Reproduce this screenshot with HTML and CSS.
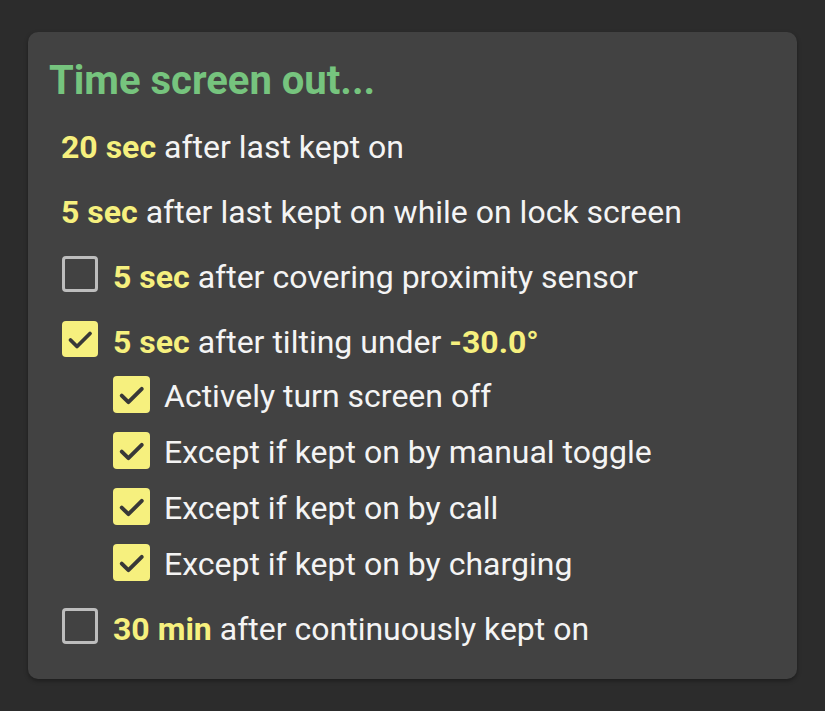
FILE: index.html
```html
<!DOCTYPE html>
<html lang="en">
<head>
<meta charset="utf-8">
<title>Time screen out</title>
<link rel="stylesheet" href="styles.css">
</head>
<body>
<div class="card">
  <h1 class="title">Time screen out...</h1>
  <div class="list">
    <div class="row"><span class="text"><b>20 sec</b> after last kept on</span></div>
    <div class="row"><span class="text"><b>5 sec</b> after last kept on while on lock screen</span></div>
    <div class="row"><span class="box"></span><span class="text"><b>5 sec</b> after covering proximity sensor</span></div>
    <div class="group">
      <div class="row"><span class="box on"><svg viewBox="0 0 36 36"><path d="M8.5 19L15 25.5L28 12.5"/></svg></span><span class="text"><b>5 sec</b> after tilting under <b>-30.0°</b></span></div>
      <div class="sublist">
        <div class="row sub"><span class="box on"><svg viewBox="0 0 36 36"><path d="M8.5 19L15 25.5L28 12.5"/></svg></span><span class="text">Actively turn screen off</span></div>
        <div class="row sub"><span class="box on"><svg viewBox="0 0 36 36"><path d="M8.5 19L15 25.5L28 12.5"/></svg></span><span class="text">Except if kept on by manual toggle</span></div>
        <div class="row sub"><span class="box on"><svg viewBox="0 0 36 36"><path d="M8.5 19L15 25.5L28 12.5"/></svg></span><span class="text">Except if kept on by call</span></div>
        <div class="row sub"><span class="box on"><svg viewBox="0 0 36 36"><path d="M8.5 19L15 25.5L28 12.5"/></svg></span><span class="text">Except if kept on by charging</span></div>
      </div>
    </div>
    <div class="row"><span class="box"></span><span class="text"><b>30 min</b> after continuously kept on</span></div>
  </div>
</div>
</body>
</html>
```

FILE: styles.css
```css
html, body {
  margin: 0;
  padding: 0;
  background: #2c2c2c;
}
body {
  padding: 32px 28px;
  font-family: Roboto, "Liberation Sans", sans-serif;
}
.card {
  background: #424242;
  border-radius: 10px;
  box-shadow: 0 2px 4px rgba(0,0,0,0.35);
  padding: 26px 21px 28px 21px;
}
.title {
  margin: 0;
  font-size: 40px;
  line-height: 46px;
  font-weight: 700;
  color: #76c47e;
}
.list {
  margin-top: 21px;
  margin-left: 12px;
  display: flex;
  flex-direction: column;
  gap: 21px;
}
.group {
  display: flex;
  flex-direction: column;
  gap: 10px;
}
.sublist {
  margin-left: 52px;
  display: flex;
  flex-direction: column;
  gap: 12px;
}
.row {
  height: 44px;
  display: flex;
  align-items: center;
  gap: 15px;
}
.text {
  font-size: 32px;
  color: #f4f4f4;
  white-space: nowrap;
}
.text b {
  font-weight: 700;
  color: #f6f07e;
}
.box {
  flex: none;
  width: 36px;
  height: 36px;
  box-sizing: border-box;
  border: 3px solid #bdbdbd;
  border-radius: 4px;
  margin-top: -6px;
  margin-left: 1px;
}
.sub .box {
  width: 37px;
  height: 37px;
  margin-top: -3px;
  margin-left: 0;
}
.sub {
  gap: 14px;
}
.box.on {
  background: #f6f07e;
  border: none;
}
.box svg {
  display: block;
  width: 100%;
  height: 100%;
  fill: none;
  stroke: #383838;
  stroke-width: 3.8;
  stroke-linecap: round;
  stroke-linejoin: round;
}
```
